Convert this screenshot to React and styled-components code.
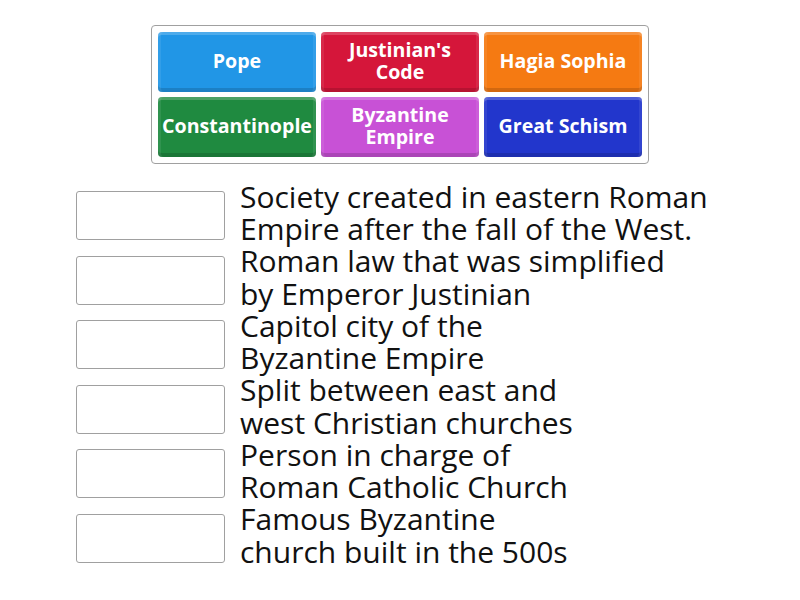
import React from "react";
import styled, { createGlobalStyle } from "styled-components";

const Global = createGlobalStyle`
  html, body { margin: 0; padding: 0; background: #fff; }
  body { font-family: "Open Sans", "Noto Sans", sans-serif; }
`;

const Page = styled.div`
  width: 800px;
  height: 600px;
  display: flex;
  flex-direction: column;
  align-items: center;
  padding-top: 25px;
  box-sizing: border-box;
`;

const Bank = styled.div`
  display: grid;
  grid-template-columns: repeat(3, 158px);
  grid-auto-rows: 60px;
  column-gap: 5px;
  row-gap: 5px;
  padding: 6px;
  border: 1px solid #a0a0a0;
  border-radius: 4px;
`;

const Tile = styled.div`
  background: ${(p) => p.$bg};
  border-radius: 4px;
  color: #fff;
  font-weight: 700;
  font-size: 19.6px;
  line-height: 22px;
  display: flex;
  align-items: center;
  justify-content: center;
  text-align: center;
  box-shadow: inset 0 3px 0 rgba(255, 255, 255, 0.2),
    inset 3px 0 0 rgba(255, 255, 255, 0.08),
    inset -3px 0 0 rgba(255, 255, 255, 0.08),
    inset 0 -4px 0 rgba(0, 0, 0, 0.14);
  padding-bottom: 3px;
  box-sizing: border-box;
  white-space: nowrap;
`;

const List = styled.div`
  margin-top: 17px;
  width: 648px;
  display: flex;
  flex-direction: column;
`;

const Row = styled.div`
  display: flex;
  align-items: center;
  height: 64.5px;
`;

const Slot = styled.div`
  width: 147px;
  height: 47px;
  border: 1px solid #a0a0a0;
  border-radius: 3px;
  flex-shrink: 0;
  margin-top: 5px;
`;

const Clue = styled.div`
  margin-left: 15px;
  font-size: 30px;
  line-height: 32.5px;
  color: #111;
  white-space: nowrap;
`;

const tiles = [
  { t: ["Pope"], bg: "#2196e6" },
  { t: ["Justinian's", "Code"], bg: "#d5163a" },
  { t: ["Hagia Sophia"], bg: "#f57a12" },
  { t: ["Constantinople"], bg: "#1f8a40" },
  { t: ["Byzantine", "Empire"], bg: "#c851d6" },
  { t: ["Great Schism"], bg: "#2236cc" },
];

const clues = [
  ["Society created in eastern Roman", "Empire after the fall of the West."],
  ["Roman law that was simplified", "by Emperor Justinian"],
  ["Capitol city of the", "Byzantine Empire"],
  ["Split between east and", "west Christian churches"],
  ["Person in charge of", "Roman Catholic Church"],
  ["Famous Byzantine", "church built in the 500s"],
];

export default function App() {
  return (
    <Page>
      <Global />
      <Bank>
        {tiles.map((x) => (
          <Tile key={x.t.join(" ")} $bg={x.bg}>
            <span>
              {x.t.map((l, i) => (
                <React.Fragment key={i}>
                  {i > 0 && <br />}
                  {l}
                </React.Fragment>
              ))}
            </span>
          </Tile>
        ))}
      </Bank>
      <List>
        {clues.map((c, i) => (
          <Row key={i}>
            <Slot />
            <Clue>
              {c[0]}
              <br />
              {c[1]}
            </Clue>
          </Row>
        ))}
      </List>
    </Page>
  );
}
